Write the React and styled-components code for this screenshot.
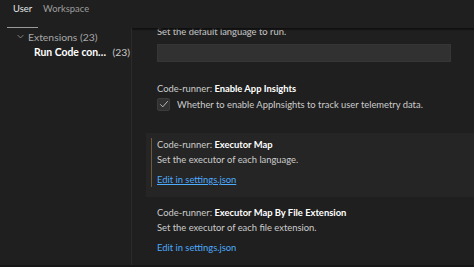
import React, { useLayoutEffect, useRef } from "react";
import styled, { createGlobalStyle } from "styled-components";

const GlobalStyle = createGlobalStyle`
  html, body {
    margin: 0;
    padding: 0;
    background: #1f1f1f;
    overflow: hidden;
  }
  * {
    box-sizing: border-box;
  }
`;

const Window = styled.div`
  width: 474px;
  height: 267px;
  display: flex;
  flex-direction: column;
  background: #1f1f1f;
  color: #cccccc;
  font-family: Lato, "Open Sans", sans-serif;
  font-size: 9.4px;
  border-bottom: 2px solid #161616;
`;

const Tabs = styled.div`
  height: 28px;
  display: flex;
  align-items: flex-start;
  padding-left: 7px;
  flex-shrink: 0;
`;

const Tab = styled.div`
  padding: 1px 6px 0;
  height: 28px;
  line-height: 15px;
  font-size: 9.4px;
  color: ${(p) => (p.$active ? "#e7e7e7" : "#9d9d9d")};
  border-bottom: 1px solid ${(p) => (p.$active ? "#9a9a9a" : "transparent")};
  margin-right: -1px;
`;

const Body = styled.div`
  flex: 1;
  display: flex;
  min-height: 0;
`;

const Tree = styled.div`
  width: 132px;
  flex-shrink: 0;
  border-right: 1px solid #2b2b2b;
  padding-top: 1px;
  font-size: 10.4px;
`;

const TreeRow = styled.div`
  height: 15px;
  display: flex;
  align-items: center;
  padding-left: ${(p) => p.$indent}px;
  padding-right: 1px;
  white-space: nowrap;
`;

const Chevron = styled.svg`
  width: 9px;
  height: 9px;
  margin-right: 3px;
  flex-shrink: 0;
`;

const TreeLabel = styled.span`
  flex: 1;
  min-width: 0;
  overflow: hidden;
  text-overflow: ellipsis;
  color: ${(p) => (p.$bold ? "#ffffff" : "#a8a8a8")};
  font-weight: ${(p) => (p.$bold ? 700 : 400)};
`;

const Count = styled.span`
  margin-left: 5px;
  color: #c8c8c8;
`;

const Content = styled.div`
  flex: 1;
  position: relative;
  overflow: hidden;

  &::before {
    content: "";
    position: absolute;
    left: 0;
    right: 0;
    top: 0;
    height: 3px;
    background: linear-gradient(#0c0c0c, rgba(0, 0, 0, 0));
    z-index: 1;
  }
`;

const Scroller = styled.div`
  height: 100%;
  overflow: hidden;
  padding: 4px 0 0 14px;
`;

const List = styled.div`
  display: flex;
  flex-direction: column;
  gap: 4px;
  padding-top: 5px;
`;

const Item = styled.div`
  padding: 5px 0 10px 5px;
  background: ${(p) => (p.$focused ? "#252525" : "transparent")};
`;

const ItemInner = styled.div`
  border-left: 1px solid ${(p) => (p.$focused ? "#6e5a3c" : "transparent")};
  padding-left: 5px;
`;

const Title = styled.div`
  line-height: 14px;
  color: #cccccc;
  white-space: nowrap;

  b {
    color: #ffffff;
    font-weight: 700;
  }
`;

const Desc = styled.div`
  margin-top: 1px;
  line-height: 14px;
  color: #cccccc;
  white-space: nowrap;
`;

const Input = styled.div`
  margin-top: 5px;
  margin-bottom: 1px;
  width: 294px;
  height: 18px;
  background: #313131;
  border: 1px solid #363636;
`;

const CheckRow = styled.div`
  margin: 1px 0 8px;
  display: flex;
  align-items: center;
  gap: 7px;
  height: 14px;
`;

const Box = styled.div`
  width: 13px;
  height: 13px;
  background: #313131;
  border: 1px solid #3c3c3c;
  border-radius: 2px;
  display: flex;
  align-items: center;
  justify-content: center;
`;

const Link = styled.a`
  display: block;
  margin-top: 6px;
  line-height: 14px;
  color: #4daafc;
  text-decoration: ${(p) => (p.$underline ? "underline" : "none")};
`;

const settings = [
  {
    name: "Default Language",
    desc: "Set the default language to run.",
    kind: "input",
  },
  {
    name: "Enable App Insights",
    desc: "Whether to enable AppInsights to track user telemetry data.",
    kind: "check",
  },
  {
    name: "Executor Map",
    desc: "Set the executor of each language.",
    kind: "link",
    focused: true,
  },
  {
    name: "Executor Map By File Extension",
    desc: "Set the executor of each file extension.",
    kind: "link",
  },
];

const Setting = ({ s }) => (
  <Item $focused={s.focused}>
    <ItemInner $focused={s.focused}>
      <Title>
        Code-runner: <b>{s.name}</b>
      </Title>
      {s.kind === "check" ? (
        <CheckRow>
          <Box>
            <svg width="10" height="10" viewBox="0 0 16 16" fill="none">
              <path d="M2 8.5 L6 12.5 L14 3.5" stroke="#cccccc" strokeWidth="1.4" />
            </svg>
          </Box>
          <span>{s.desc}</span>
        </CheckRow>
      ) : (
        <Desc>{s.desc}</Desc>
      )}
      {s.kind === "input" && <Input />}
      {s.kind === "link" && (
        <Link href="#" $underline={s.focused}>
          Edit in settings.json
        </Link>
      )}
    </ItemInner>
  </Item>
);

export default function App() {
  const scroller = useRef(null);
  useLayoutEffect(() => {
    if (scroller.current) scroller.current.scrollTop = 32;
  }, []);

  return (
    <>
      <GlobalStyle />
      <Window>
        <Tabs>
          <Tab $active>User</Tab>
          <Tab>Workspace</Tab>
        </Tabs>
        <Body>
          <Tree>
            <TreeRow $indent={16}>
              <Chevron viewBox="0 0 16 16" fill="none">
                <path d="M3 5.5 L8 10.5 L13 5.5" stroke="#a8a8a8" strokeWidth="1.3" />
              </Chevron>
              <TreeLabel>Extensions (23)</TreeLabel>
            </TreeRow>
            <TreeRow $indent={34}>
              <TreeLabel $bold>Run Code configuration</TreeLabel>
              <Count>(23)</Count>
            </TreeRow>
          </Tree>
          <Content>
            <Scroller ref={scroller}>
              <List>
                {settings.map((s) => (
                  <Setting key={s.name} s={s} />
                ))}
              </List>
            </Scroller>
          </Content>
        </Body>
      </Window>
    </>
  );
}
